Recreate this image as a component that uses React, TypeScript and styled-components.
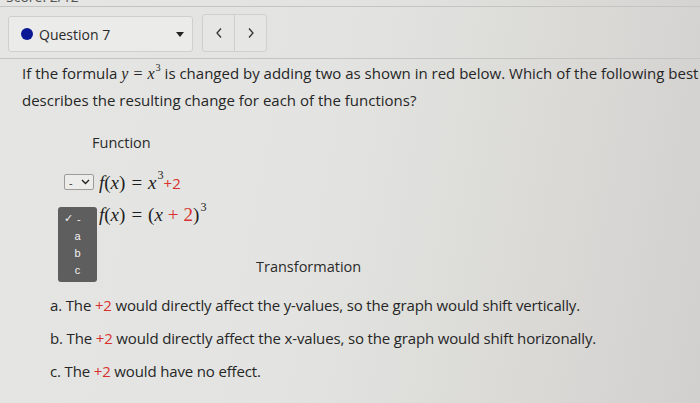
import { createGlobalStyle, styled } from 'styled-components';

const GlobalStyle = createGlobalStyle`
  html, body {
    margin: 0;
    padding: 0;
  }
  body {
    font-family: "Open Sans", "Liberation Sans", sans-serif;
    color: #2a2a2a;
  }
`;

const SERIF = '"Liberation Serif", "DejaVu Serif", serif';

const Page = styled.div`
  width: 700px;
  height: 403px;
  overflow: hidden;
  background: linear-gradient(100deg, #e5e6e3 0%, #e3e4e1 45%, #d9d8d5 80%, #d2d0ce 100%);
`;

const Score = styled.div`
  margin-top: -12px;
  padding-left: 6px;
  font-size: 14px;
  line-height: 18px;
  color: #555;
`;

const Header = styled.div`
  display: flex;
  align-items: center;
  gap: 9px;
  margin-top: 0;
  padding: 9px 8px 6px;
  border-top: 1px solid #c4c4c2;
  border-bottom: 1px solid #c4c4c2;
`;

const QuestionSelect = styled.div`
  display: flex;
  align-items: center;
  width: 185px;
  height: 36px;
  box-sizing: border-box;
  padding: 0 8px 0 12px;
  border: 1px solid #cfcfcd;
  border-radius: 3px;
  background: #ebebe9;
  font-size: 14px;
`;

const Dot = styled.span`
  width: 12px;
  height: 12px;
  border-radius: 50%;
  background: #0b1896;
  margin-right: 6px;
`;

const Label = styled.span`
  flex: 1;
`;

const Caret = styled.span`
  width: 0;
  height: 0;
  border-left: 4px solid transparent;
  border-right: 4px solid transparent;
  border-top: 5px solid #222;
`;

const NavGroup = styled.div`
  display: flex;
  height: 36px;
  margin-top: -3px;
  border: 1px solid #cfcfcd;
  border-radius: 3px;
  background: #e6e6e4;
`;

const NavButton = styled.div<{ $first?: boolean }>`
  width: 31px;
  display: flex;
  align-items: center;
  justify-content: center;
  border-right: ${({ $first }) => ($first ? '1px solid #cfcfcd' : 'none')};
  color: #333;
`;

const Body = styled.div`
  padding: 1px 0 0 22px;
`;

const Prompt = styled.p`
  margin: 0;
  font-size: 15px;
  line-height: 27px;
  color: #262626;
`;

const Math = styled.span`
  font-family: ${SERIF};
  font-style: italic;
  font-size: 16px;
  line-height: 1;
`;

const Upright = styled.span`
  font-family: ${SERIF};
  font-style: normal;
`;

const Op = styled.span<{ $gap?: number }>`
  display: inline-block;
  font-family: ${SERIF};
  font-style: normal;
  margin: 0 ${({ $gap }) => $gap ?? 6}px;
`;

const Sup = styled.sup`
  font-size: 0.64em;
  font-style: normal;
  vertical-align: 0.8em;
  line-height: 0;
  margin-left: 1px;
`;

const Red = styled.span<{ $serif?: boolean }>`
  color: #d8302e;
  font-family: ${({ $serif }) => ($serif ? SERIF : '"Open Sans", sans-serif')};
  font-size: ${({ $serif }) => ($serif ? 'inherit' : '15px')};
  font-style: normal;
`;

const ColumnTitle = styled.div<{ $indent: number; $top: number }>`
  margin-top: ${({ $top }) => $top}px;
  margin-left: ${({ $indent }) => $indent}px;
  font-size: 14.5px;
  color: #2a2a2a;
`;

const Matching = styled.div`
  display: flex;
  flex-direction: column;
  margin-top: 14px;
  margin-left: 42px;
`;

const MatchRow = styled.div`
  display: flex;
  align-items: center;
  height: 32px;
  position: relative;
`;

const SmallSelect = styled.div`
  display: flex;
  align-items: center;
  justify-content: space-between;
  width: 30px;
  height: 16px;
  box-sizing: border-box;
  padding: 0 3px 0 4px;
  border: 1px solid #9c9c9a;
  border-radius: 2px;
  background: #ececea;
  font-size: 11px;
`;

const Chevron = () => (
  <svg width="9" height="6" viewBox="0 0 9 6">
    <path d="M1 1l3.5 3.5L8 1" stroke="#222" strokeWidth="1.4" fill="none" />
  </svg>
);

const Spacer = styled.div`
  width: 30px;
`;

const MathLine = styled.div`
  margin-left: 5px;
  font-family: ${SERIF};
  font-style: italic;
  font-size: 19px;
  line-height: 1;
  color: #1e1e1e;
  white-space: nowrap;
`;

const Menu = styled.div`
  position: absolute;
  left: -6px;
  top: 9px;
  width: 39px;
  padding: 3px 0 4px;
  border-radius: 3px;
  background: #5e5e5e;
  color: #f2f2f2;
  font-family: "Liberation Sans", "Open Sans", sans-serif;
  font-size: 11px;
  z-index: 2;
`;

const MenuItem = styled.div<{ $checked?: boolean }>`
  height: 17px;
  display: flex;
  align-items: center;
  justify-content: ${({ $checked }) => ($checked ? 'flex-start' : 'center')};
  padding-left: ${({ $checked }) => ($checked ? '6px' : '0')};
  gap: 4px;
`;

const TransformTitle = styled.div`
  margin-top: 27px;
  margin-left: 234px;
  font-size: 14.5px;
`;

const Options = styled.div`
  display: flex;
  flex-direction: column;
  gap: 13px;
  margin-top: 19px;
  margin-left: 28px;
`;

const Option = styled.div`
  font-size: 15px;
  line-height: 20px;
  letter-spacing: -0.15px;
  color: #262626;
`;

export default function App() {
  return (
    <Page>
      <GlobalStyle />
      <Score>Score: 2/12</Score>
      <Header>
        <QuestionSelect>
          <Dot />
          <Label>Question 7</Label>
          <Caret />
        </QuestionSelect>
        <NavGroup>
          <NavButton $first>
            <svg width="8" height="12" viewBox="0 0 8 12">
              <path d="M6 1.5L2 6l4 4.5" stroke="#333" strokeWidth="1.3" fill="none" />
            </svg>
          </NavButton>
          <NavButton>
            <svg width="8" height="12" viewBox="0 0 8 12">
              <path d="M2 1.5L6 6l-4 4.5" stroke="#333" strokeWidth="1.3" fill="none" />
            </svg>
          </NavButton>
        </NavGroup>
      </Header>
      <Body>
        <Prompt>
          If the formula{' '}
          <Math>
            y<Op $gap={5}>=</Op>x<Sup>3</Sup>
          </Math>{' '}
          is changed by adding two as shown in red below. Which of the following best describes
          the resulting change for each of the functions?
        </Prompt>
        <ColumnTitle $indent={70} $top={19}>
          Function
        </ColumnTitle>
        <Matching>
          <MatchRow>
            <SmallSelect>
              <span>-</span>
              <Chevron />
            </SmallSelect>
            <MathLine>
              f<Upright>(</Upright>x<Upright>)</Upright>
              <Op>=</Op>x<Sup>3</Sup>
              <Red>+2</Red>
            </MathLine>
          </MatchRow>
          <MatchRow>
            <Spacer />
            <Menu>
              <MenuItem $checked>
                <span>✓</span>
                <span>-</span>
              </MenuItem>
              <MenuItem>a</MenuItem>
              <MenuItem>b</MenuItem>
              <MenuItem>c</MenuItem>
            </Menu>
            <MathLine>
              f<Upright>(</Upright>x<Upright>)</Upright>
              <Op>=</Op>
              <Upright>(</Upright>x
              <Red $serif>
                <Op $gap={5}>+</Op>2
              </Red>
              <Upright>)</Upright>
              <Sup>3</Sup>
            </MathLine>
          </MatchRow>
        </Matching>
        <TransformTitle>Transformation</TransformTitle>
        <Options>
          <Option>
            a. The <Red>+2</Red> would directly affect the y-values, so the graph would shift
            vertically.
          </Option>
          <Option>
            b. The <Red>+2</Red> would directly affect the x-values, so the graph would shift
            horizonally.
          </Option>
          <Option>
            c. The <Red>+2</Red> would have no effect.
          </Option>
        </Options>
      </Body>
    </Page>
  );
}
